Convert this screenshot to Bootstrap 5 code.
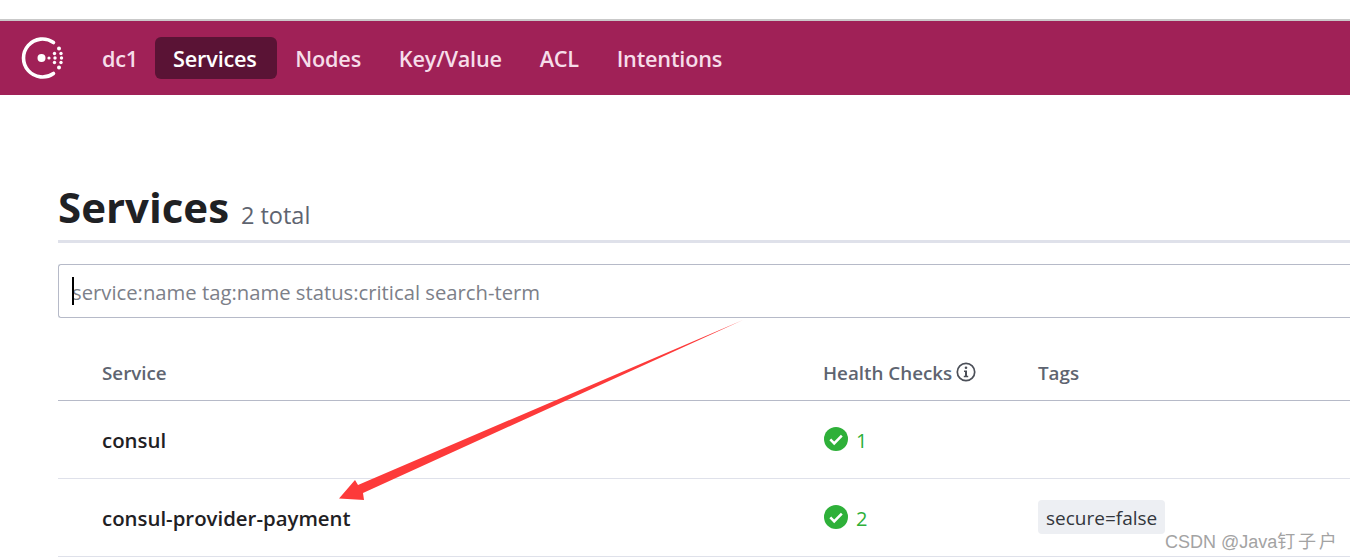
<!DOCTYPE html>
<html lang="en">
<head>
  <meta charset="UTF-8">
  <title>Services - Consul</title>
  <link href="https://cdn.jsdelivr.net/npm/bootstrap@5.3.3/dist/css/bootstrap.min.css" rel="stylesheet">
  <style>
    html, body { height: 560px; overflow: hidden; }
    body { font-family: "Open Sans", "Noto Sans", sans-serif; background: #fff; color: #1f2124; position: relative; }
    .top-gap { height: 19px; background: #fff; border-bottom: 2px solid #c9c9c9; box-sizing: content-box; }
    .consul-bar { height: 74px; background: #a02157; padding: 0 0 0 21px; }
    .consul-bar svg { display: block; margin-right: 37px; }
    .bar-link { color: #f6dde9; font-size: 21.7px; font-weight: 600; text-decoration: none; line-height: 44px; height: 42px; padding: 0 18.5px; border-radius: 6px; margin-right: .8px; letter-spacing: -.2px; }
    .bar-link:hover { color: #fff; }
    .bar-link.bar-dc { padding: 0 17px 0 0; margin-right: 0; }
    .bar-link.on { background: #5a1335; color: #fff; padding: 0 20px 0 18px; margin-right: 0; }
    .page-main { padding: 88px 0 0 58px; }
    .page-head { border-bottom: 3px solid #dfe1ea; height: 60px; }
    .page-head h1 { font-size: 42px; font-weight: 700; line-height: 48px; margin: 0; }
    .page-head h1 span { font-size: 23.5px; font-weight: 400; color: #5e6470; margin-left: 1px; vertical-align: -1px; }
    .search-box { margin-top: 21px; height: 54px; border: 1px solid #b6bac8; border-radius: 3px 0 0 3px; border-right: 0; padding: 2px 13px 0; display: flex; align-items: center; font-size: 20.25px; color: #7c8089; position: relative; }
    .search-caret { position: absolute; left: 13px; top: 12px; width: 2px; height: 28px; background: #000; }
    .svc-table { margin: 0; width: 100%; table-layout: fixed; border-collapse: collapse; }
    .svc-table th, .svc-table td { padding: 0; vertical-align: middle; font-size: 20.4px; }
    .svc-table th { height: 82px; padding-top: 29px; color: #5e6470; font-weight: 600; border-bottom: 1px solid #b6bac8; font-size: 18.8px; }
    .svc-table td { height: 78px; font-weight: 600; color: #1f2124; border-bottom: 1px solid #dfe1ea; padding-top: 2px; }
    .col-pad { width: 44px; }
    .col-name { width: 721px; }
    .col-health { width: 215px; }
    .svc-table td.health-val { color: #2eb039; font-weight: 400; font-size: 20px; padding-top: 3px; }
    .health-val svg { vertical-align: -4px; margin: -1px 8px 0 1px; position: relative; top: -1px; }
    .info-mark { vertical-align: -2px; margin-left: -1px; }
    .tag-chip { display: inline-block; background: #edeff3; color: #33363c; font-weight: 400; font-size: 19px; line-height: 32px; padding: 2px 8px 0; border-radius: 4px; margin-bottom: 2px; }
    .red-arrow { position: absolute; left: 0; top: 0; pointer-events: none; }
    .csdn-mark { position: absolute; left: 1165px; top: 530px; font-family: "Liberation Sans", "Noto Sans CJK SC", sans-serif; font-size: 18px; line-height: 24px; color: #a3a3a3; white-space: nowrap; }
    .csdn-mark span { letter-spacing: 2.7px; }
  </style>
</head>
<body>

  <div class="top-gap"></div>

  <nav class="consul-bar d-flex align-items-center">
    <svg width="44" height="44" viewBox="0 0 44 44">
      <path d="M32.5 6.5A19 19 0 1 0 32.5 37.5" fill="none" stroke="#fff" stroke-width="3.6" stroke-linecap="round"/>
      <g fill="#fff">
        <circle cx="20.5" cy="22" r="4"/>
        <circle cx="28" cy="22" r="1.6"/>
        <circle cx="38" cy="12.5" r="2"/>
        <circle cx="33.5" cy="17.5" r="1.7"/>
        <circle cx="40" cy="17.5" r="1.7"/>
        <circle cx="34" cy="22" r="1.7"/>
        <circle cx="40.5" cy="22" r="1.7"/>
        <circle cx="33.5" cy="26.5" r="1.7"/>
        <circle cx="40" cy="26.5" r="1.7"/>
        <circle cx="38" cy="31.5" r="2"/>
      </g>
    </svg>
    <a href="#" class="bar-link bar-dc">dc1</a>
    <a href="#" class="bar-link on">Services</a>
    <a href="#" class="bar-link">Nodes</a>
    <a href="#" class="bar-link">Key/Value</a>
    <a href="#" class="bar-link">ACL</a>
    <a href="#" class="bar-link">Intentions</a>
  </nav>

  <main class="page-main">
    <div class="page-head">
      <h1>Services <span>2 total</span></h1>
    </div>

    <div class="search-box">
      <span class="search-caret"></span>
      service:name tag:name status:critical search-term
    </div>

    <table class="svc-table">
      <colgroup>
        <col class="col-pad"><col class="col-name"><col class="col-health"><col>
      </colgroup>
      <thead>
        <tr>
          <th></th>
          <th>Service</th>
          <th>Health Checks
            <svg class="info-mark" width="20" height="20" viewBox="0 0 20 20">
              <circle cx="10" cy="10" r="8.7" fill="none" stroke="#4b4f58" stroke-width="1.7"/>
              <circle cx="10" cy="5.8" r="1.3" fill="#4b4f58"/>
              <path d="M8 8.6h3v5.2h1.2v1.4H7.8v-1.4H9V10H8z" fill="#4b4f58"/>
            </svg>
          </th>
          <th>Tags</th>
        </tr>
      </thead>
      <tbody>
        <tr>
          <td></td>
          <td>consul</td>
          <td class="health-val">
            <svg width="24" height="24" viewBox="0 0 24 24">
              <circle cx="12" cy="12" r="12" fill="#2eb039"/>
              <path d="M6.3 12.4l3.9 3.9 7.6-7.6" fill="none" stroke="#fff" stroke-width="2.6"/>
            </svg>1</td>
          <td></td>
        </tr>
        <tr>
          <td></td>
          <td>consul-provider-payment</td>
          <td class="health-val">
            <svg width="24" height="24" viewBox="0 0 24 24">
              <circle cx="12" cy="12" r="12" fill="#2eb039"/>
              <path d="M6.3 12.4l3.9 3.9 7.6-7.6" fill="none" stroke="#fff" stroke-width="2.6"/>
            </svg>2</td>
          <td><span class="tag-chip">secure=false</span></td>
        </tr>
      </tbody>
    </table>
  </main>

  <svg class="red-arrow" width="1350" height="560" viewBox="0 0 1350 560">
    <polygon points="743,320 363,493 364,500 339,498.5 355,480 358,485" fill="#fd3a3a"/>
  </svg>
  <div class="csdn-mark">CSDN @Java<span>钉子户</span></div>

  <script src="https://cdn.jsdelivr.net/npm/bootstrap@5.3.3/dist/js/bootstrap.bundle.min.js"></script>
</body>
</html>
